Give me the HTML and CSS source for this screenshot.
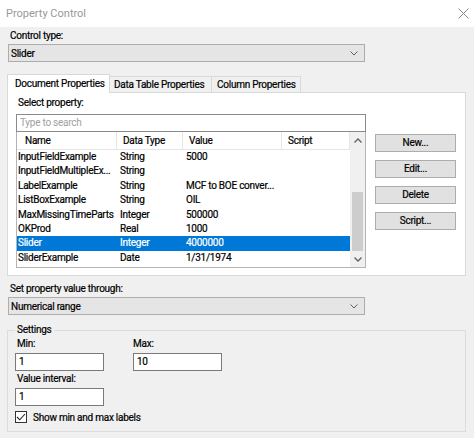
FILE: index.html
```html
<!DOCTYPE html>
<html>
<head>
<meta charset="utf-8">
<link rel="stylesheet" href="styles.css">
</head>
<body>
<div class="titlebar">
  <span class="title">Property Control</span>
  <svg class="close" width="11" height="11" viewBox="0 0 11 11"><path d="M0.5 0.5 L10.5 10.5 M10.5 0.5 L0.5 10.5" stroke="#8a8a8a" stroke-width="1" fill="none"/></svg>
</div>
<div class="content">
  <div class="label ctl-label">Control type:</div>
  <div class="combo"><span>Slider</span><svg width="8" height="5" viewBox="0 0 8 5"><path d="M0.5 0.5 L4 4 L7.5 0.5" stroke="#606060" fill="none"/></svg></div>

  <div class="tabs">
    <div class="tab active">Document Properties</div>
    <div class="tab data">Data Table Properties</div>
    <div class="tab col">Column Properties</div>
  </div>
  <div class="panel">
    <div class="label">Select property:</div>
    <div class="main">
      <div class="left">
        <div class="search">Type to search</div>
        <div class="list">
          <div class="grid">
            <div class="header">
              <div class="hcell name">Name</div>
              <div class="hcell">Data Type</div>
              <div class="hcell">Value</div>
              <div class="hcell">Script</div>
            </div>
            <div class="row"><div class="cell name">InputFieldExample</div><div class="cell">String</div><div class="cell">5000</div><div class="cell"></div></div>
            <div class="row"><div class="cell name">InputFieldMultipleEx...</div><div class="cell">String</div><div class="cell"></div><div class="cell"></div></div>
            <div class="row"><div class="cell name">LabelExample</div><div class="cell">String</div><div class="cell">MCF to BOE conver...</div><div class="cell"></div></div>
            <div class="row"><div class="cell name">ListBoxExample</div><div class="cell">String</div><div class="cell">OIL</div><div class="cell"></div></div>
            <div class="row"><div class="cell name">MaxMissingTimeParts</div><div class="cell">Integer</div><div class="cell">500000</div><div class="cell"></div></div>
            <div class="row"><div class="cell name">OKProd</div><div class="cell">Real</div><div class="cell">1000</div><div class="cell"></div></div>
            <div class="row sel"><div class="cell name">Slider</div><div class="cell">Integer</div><div class="cell">4000000</div><div class="cell"></div></div>
            <div class="row"><div class="cell name">SliderExample</div><div class="cell">Date</div><div class="cell">1/31/1974</div><div class="cell"></div></div>
          </div>
          <div class="scrollbar">
            <div class="arrow up"><svg width="8" height="5" viewBox="0 0 8 5"><path d="M0.5 4.5 L4 1 L7.5 4.5" stroke="#606060" stroke-width="1.3" fill="none"/></svg></div>
            <div class="track-top"></div>
            <div class="thumb"></div>
            <div class="track-bottom"></div>
            <div class="arrow down"><svg width="8" height="5" viewBox="0 0 8 5"><path d="M0.5 0.5 L4 4 L7.5 0.5" stroke="#606060" stroke-width="1.3" fill="none"/></svg></div>
          </div>
        </div>
      </div>
      <div class="buttons">
        <div class="btn">New...</div>
        <div class="btn">Edit...</div>
        <div class="btn">Delete</div>
        <div class="btn">Script...</div>
      </div>
    </div>
  </div>

  <div class="label through-label">Set property value through:</div>
  <div class="combo"><span>Numerical range</span><svg width="8" height="5" viewBox="0 0 8 5"><path d="M0.5 0.5 L4 4 L7.5 0.5" stroke="#606060" fill="none"/></svg></div>

  <fieldset class="settings">
    <legend>Settings</legend>
    <div class="minmax">
      <div class="field">
        <div class="flabel">Min:</div>
        <div class="input">1</div>
      </div>
      <div class="field second">
        <div class="flabel">Max:</div>
        <div class="input">10</div>
      </div>
    </div>
    <div class="flabel interval">Value interval:</div>
    <div class="input">1</div>
    <div class="check-row">
      <span class="checkbox"><svg width="10" height="10" viewBox="0 0 10 10"><path d="M1 5 L3.8 7.8 L9 2" stroke="#222" stroke-width="1.1" fill="none"/></svg></span>
      <span>Show min and max labels</span>
    </div>
  </fieldset>
</div>
</body>
</html>
```

FILE: styles.css
```css
* { box-sizing: border-box; }

body {
  margin: 0;
  width: 474px;
  height: 438px;
  overflow: hidden;
  background: #f0f0f0;
  font-family: Roboto, "Liberation Sans", sans-serif;
  font-size: 10px;
  letter-spacing: -0.25px;
  color: #000;
  -webkit-text-stroke-width: 0.2px;
}

.titlebar {
  height: 27px;
  background: #fff;
  display: flex;
  align-items: center;
  justify-content: space-between;
  padding: 0 5px 0 6px;
}

.title {
  color: #999;
  font-size: 11px;
  letter-spacing: 0;
  -webkit-text-stroke-width: 0;
}

.content {
  padding-left: 8px;
}

.label {
  height: 14px;
  line-height: 14px;
  padding-left: 2px;
  white-space: nowrap;
}

.ctl-label { margin-top: 2px; }

.combo {
  width: 357px;
  height: 18px;
  margin-top: 1px;
  background: #e5e5e5;
  border: 1px solid #adadad;
  display: flex;
  align-items: center;
  justify-content: space-between;
  padding: 0 6px 0 2px;
}

.tabs {
  display: flex;
  align-items: flex-end;
  height: 18px;
  margin: 12px 0 0 -1px;
}

.tab {
  height: 16px;
  line-height: 15px;
  border: 1px solid #d9d9d9;
  border-bottom: none;
  background: #f0f0f0;
  white-space: nowrap;
}

.tab.active {
  width: 103px;
  height: 19px;
  margin-bottom: -1px;
  background: #fff;
  padding-left: 7px;
  line-height: 17px;
  position: relative;
  z-index: 1;
}

.tab.data {
  width: 102px;
  border-left: none;
  padding-left: 4px;
}

.tab.col {
  width: 89px;
  border-left: none;
  padding-left: 5px;
}

.panel {
  width: 459px;
  height: 184px;
  margin-left: -1px;
  background: #fff;
  border: 1px solid #d9d9d9;
  padding: 3px 0 0 8px;
}

.main {
  display: flex;
  margin-top: 4px;
}

.left { width: 350px; }

.search {
  height: 18px;
  border: 1px solid #8a8a8a;
  padding-left: 3px;
  line-height: 16px;
  color: #a0a0a0;
  -webkit-text-stroke-width: 0;
}

.list {
  height: 136px;
  border: 1px solid #b4b4b4;
  border-top: none;
  display: flex;
}

.grid { width: 333px; }

.header, .row {
  display: grid;
  grid-template-columns: 100px 66px 99px 68px;
}

.header {
  height: 18px;
  border-bottom: 1px solid #e5e5e5;
}

.hcell {
  line-height: 17px;
  padding-left: 6px;
  border-right: 1px solid #e5e5e5;
}

.hcell.name { padding-left: 8px; }

.row {
  height: 14.4px;
  line-height: 14.4px;
}

.cell {
  padding-left: 3px;
  white-space: nowrap;
  overflow: hidden;
}

.cell.name { padding-left: 1px; }

.row.sel {
  background: #0078d7;
  color: #fff;
}

.scrollbar {
  width: 15px;
  background: #f0f0f0;
  display: flex;
  flex-direction: column;
}

.arrow {
  display: flex;
  align-items: center;
  justify-content: center;
}

.arrow.up { height: 17px; }
.arrow.down { height: 16px; }
.track-top { height: 43px; }
.thumb {
  height: 60px;
  margin: 0 2px;
  background: #cdcdcd;
}
.track-bottom { flex: 1; }

.buttons {
  display: flex;
  flex-direction: column;
  gap: 8px;
  margin-left: 9px;
  padding-top: 20px;
}

.btn {
  width: 81px;
  height: 18px;
  background: #e1e1e1;
  border: 1px solid #adadad;
  text-align: center;
  line-height: 16px;
}

.through-label { margin-top: 6px; }

.settings {
  width: 459px;
  height: 109px;
  margin: 8px 0 0 -1px;
  padding: 0 4px 0 7px;
  border: 1px solid #dcdcdc;
}

.settings legend {
  padding: 0 2px;
  line-height: 14px;
}

.minmax {
  display: flex;
  gap: 28px;
}

.field { width: 90px; }

.field.second .flabel { padding-left: 0; }

.flabel {
  height: 14px;
  line-height: 14px;
  padding-left: 2px;
}

.minmax .input { margin-top: 2px; }

.input {
  width: 89px;
  height: 18px;
  background: #fff;
  border: 1px solid #7a7a7a;
  padding-left: 3px;
  line-height: 16px;
}

.interval { margin-top: 1px; }

.interval + .input { margin-top: 2px; }

.check-row {
  display: flex;
  align-items: center;
  gap: 6px;
  margin-top: 5px;
}

.checkbox {
  width: 12px;
  height: 12px;
  background: #fff;
  border: 1px solid #333;
  display: flex;
  align-items: center;
  justify-content: center;
}
```
